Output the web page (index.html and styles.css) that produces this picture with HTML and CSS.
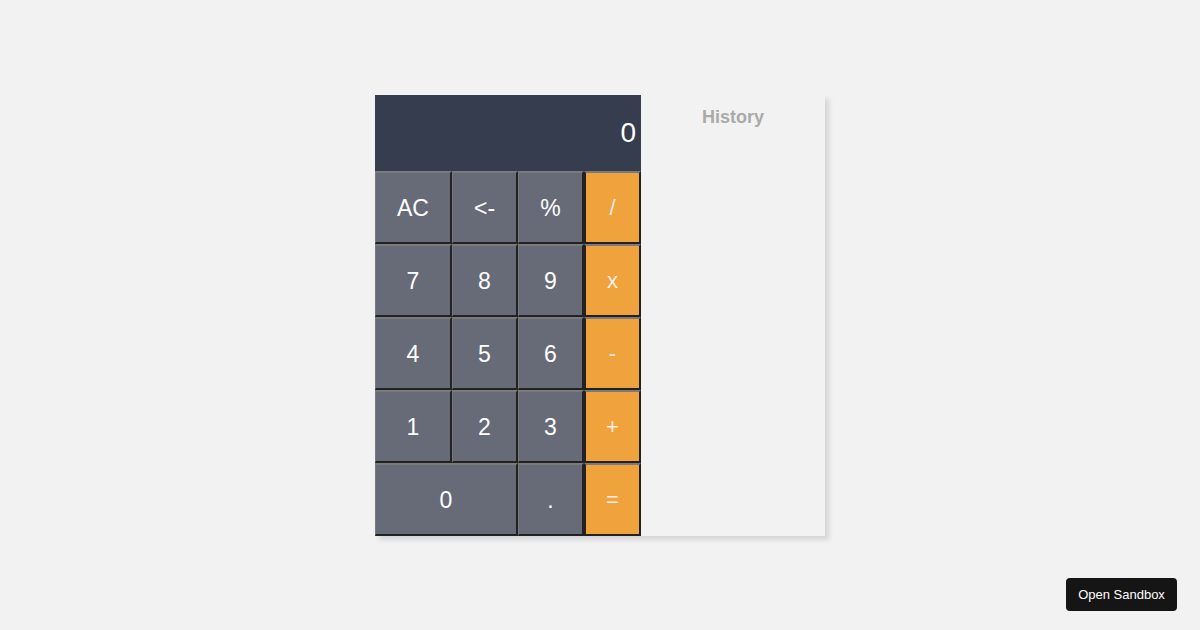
FILE: index.html
```html
<!DOCTYPE html>
<html>
<head>
<meta charset="utf-8">
<link rel="stylesheet" href="styles.css">
</head>
<body>
<main class="stage">
  <div class="app">
    <div class="calc">
      <div class="display">0</div>
      <button class="key">AC</button>
      <button class="key">&lt;-</button>
      <button class="key">%</button>
      <button class="key op">/</button>
      <button class="key">7</button>
      <button class="key">8</button>
      <button class="key">9</button>
      <button class="key op">x</button>
      <button class="key">4</button>
      <button class="key">5</button>
      <button class="key">6</button>
      <button class="key op">-</button>
      <button class="key">1</button>
      <button class="key">2</button>
      <button class="key">3</button>
      <button class="key op">+</button>
      <button class="key zero">0</button>
      <button class="key">.</button>
      <button class="key op">=</button>
    </div>
    <aside class="history">
      <h2 class="history-title">History</h2>
    </aside>
  </div>
</main>
<button class="sandbox">Open Sandbox</button>
</body>
</html>
```

FILE: styles.css
```css
html, body {
  margin: 0;
  padding: 0;
}
body {
  background: #f2f2f2;
  font-family: "Liberation Sans", Arial, sans-serif;
  width: 1200px;
  height: 630px;
  overflow: hidden;
  position: relative;
}
.stage {
  height: 630px;
  display: flex;
  align-items: center;
  justify-content: center;
}
.app {
  display: flex;
  box-shadow: 4px 4px 5px rgba(0, 0, 0, 0.12);
}
.calc {
  display: grid;
  grid-template-columns: 77px 66px 66px 57px;
  grid-template-rows: 76px repeat(5, 73px);
}
.display {
  grid-column: 1 / 5;
  background: #353d4f;
  color: #ffffff;
  font-size: 28px;
  display: flex;
  align-items: center;
  justify-content: flex-end;
  padding-right: 5px;
  padding-top: 1px;
}
.key {
  margin: 0;
  padding: 2px 0 0;
  background: #676b77;
  color: #ffffff;
  font-family: "Liberation Sans", Arial, sans-serif;
  font-size: 23px;
  border-style: solid;
  border-width: 2px 2px 2px 1px;
  border-color: #7a7a7a #222222 #222222 #7a7a7a;
}
.key.op {
  background: #f0a23c;
  color: #f7f0e6;
  font-size: 22px;
  border-width: 2px 2px 2px 2px;
  border-color: #7a7a7a #222222 #222222 #222222;
}
.key.zero {
  grid-column: span 2;
}
.history {
  width: 184px;
  background: #f2f2f2;
}
.history-title {
  margin: 12px 0 0;
  text-align: center;
  font-size: 18px;
  font-weight: bold;
  color: #aaaaaa;
}
.sandbox {
  position: absolute;
  right: 23px;
  bottom: 19px;
  width: 111px;
  height: 33px;
  background: #151515;
  color: #ffffff;
  border: none;
  border-radius: 4px;
  font-family: "Liberation Sans", Arial, sans-serif;
  font-size: 13px;
}
```
